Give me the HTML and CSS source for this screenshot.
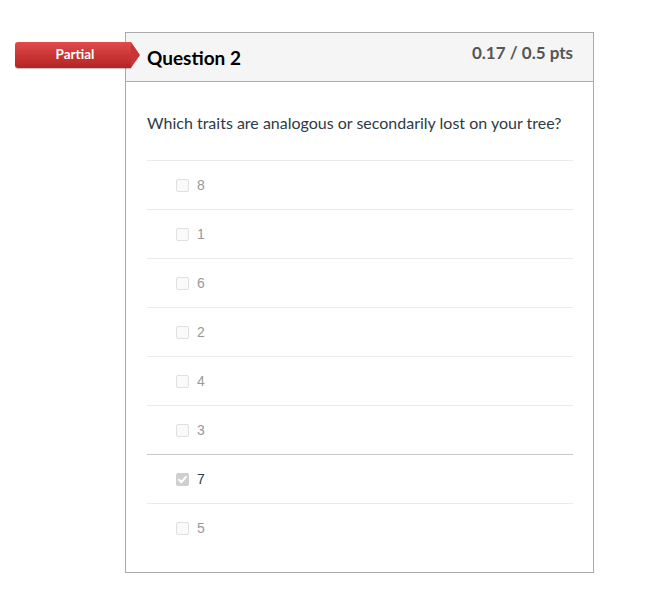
FILE: index.html
```html
<!DOCTYPE html>
<html>
<head>
<meta charset="utf-8">
<link rel="stylesheet" href="styles.css">
</head>
<body>
<div class="quiz">
  <div class="badge">Partial</div>
  <div class="question">
    <div class="header">
      <h3 class="title">Question 2</h3>
      <div class="points">0.17 / 0.5 pts</div>
    </div>
    <div class="body">
      <p class="text">Which traits are analogous or secondarily lost on your tree?</p>
      <ul class="answers">
        <li class="answer"><span class="box"></span><span class="label">8</span></li>
        <li class="answer"><span class="box"></span><span class="label">1</span></li>
        <li class="answer"><span class="box"></span><span class="label">6</span></li>
        <li class="answer"><span class="box"></span><span class="label">2</span></li>
        <li class="answer"><span class="box"></span><span class="label">4</span></li>
        <li class="answer"><span class="box"></span><span class="label">3</span></li>
        <li class="answer selected"><span class="box checked"><svg width="11" height="11" viewBox="0 0 11 11"><path d="M2 5.8 L4.4 8.2 L9 2.8" fill="none" stroke="#fff" stroke-width="2" stroke-linecap="round" stroke-linejoin="round"/></svg></span><span class="label">7</span></li>
        <li class="answer"><span class="box"></span><span class="label">5</span></li>
      </ul>
    </div>
  </div>
</div>
</body>
</html>
```
FILE: styles.css
```css
html, body {
  margin: 0;
  padding: 0;
  background: #fff;
}
.quiz {
  position: relative;
  padding: 32px 0 0 125px;
}
.badge {
  position: absolute;
  left: 15px;
  top: 42px;
  width: 116px;
  height: 26px;
  box-sizing: border-box;
  padding-left: 4px;
  background: linear-gradient(#e04a4a, #b52424);
  border-radius: 3px 0 0 3px;
  box-shadow: 0 1px 1px rgba(0,0,0,0.25);
  color: #fff;
  font-family: Lato, "Liberation Sans", sans-serif;
  font-weight: bold;
  font-size: 13.5px;
  line-height: 24px;
  text-align: center;
}
.badge::after {
  content: "";
  position: absolute;
  right: -9px;
  top: 0;
  width: 0;
  height: 0;
  border-top: 13px solid transparent;
  border-bottom: 13px solid transparent;
  border-left: 9px solid #c93434;
}
.question {
  width: 469px;
  box-sizing: border-box;
  border: 1px solid #aaaaaa;
  font-family: Lato, "Liberation Sans", sans-serif;
}
.header {
  height: 48px;
  background: #f5f5f5;
  border-bottom: 1px solid #aaaaaa;
  display: flex;
  justify-content: space-between;
  padding: 0 20px 0 21px;
}
.title {
  margin: 0;
  font-size: 19px;
  font-weight: bold;
  color: #000;
  line-height: 50px;
}
.points {
  font-size: 17px;
  font-weight: bold;
  color: #555;
  line-height: 40px;
}
.body {
  padding: 30px 20px 20px 21px;
}
.text {
  margin: 0 0 26px;
  font-size: 16px;
  line-height: 22px;
  color: #2d3b45;
}
.answers {
  list-style: none;
  margin: 0;
  padding: 0;
}
.answer {
  height: 48px;
  border-top: 1px solid #ebebeb;
  display: flex;
  align-items: center;
  padding-left: 29px;
  font-family: "Liberation Sans", Arial, sans-serif;
  font-size: 14px;
  color: #999;
}
.answer.selected {
  border-top-color: #c8c8c8;
  color: #2d3b45;
}
.box {
  width: 13px;
  height: 13px;
  box-sizing: border-box;
  border: 1px solid #e0e0e0;
  border-radius: 2px;
  background: #fafafa;
  margin-right: 8px;
  display: flex;
  align-items: center;
  justify-content: center;
}
.box.checked {
  background: #cfcfcf;
  border-color: #cfcfcf;
}
.label {
  line-height: 16px;
}
```
